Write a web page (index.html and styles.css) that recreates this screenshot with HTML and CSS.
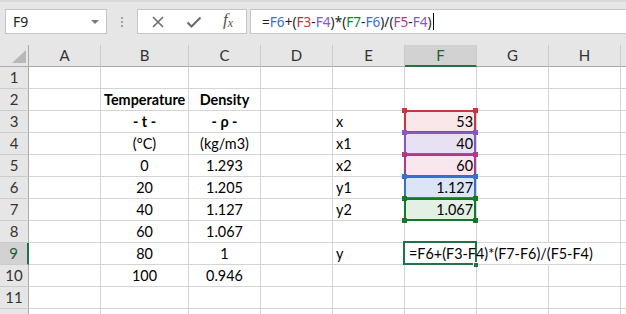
FILE: index.html
```html
<!DOCTYPE html>
<html>
<head>
<meta charset="utf-8">
<link rel="stylesheet" href="styles.css">
</head>
<body>
<div class="app">
  <div class="fbar">
    <div class="namebox">
      <span class="nb-text">F9</span>
      <svg class="nb-arrow" width="8" height="4" viewBox="0 0 8 4"><path d="M0 0H8L4 4Z" fill="#7a7a7a"/></svg>
    </div>
    <div class="grip"><span></span><span></span><span></span></div>
    <div class="btns">
      <svg class="ic" width="14" height="14" viewBox="0 0 14 14"><path d="M2 2L12 12M12 2L2 12" stroke="#6e6e6e" stroke-width="1.6" fill="none"/></svg>
      <svg class="ic" width="16" height="14" viewBox="0 0 16 14"><path d="M1.5 7.5L5.5 11.5L14.5 2.5" stroke="#6e6e6e" stroke-width="2.2" fill="none"/></svg>
      <span class="fx">f<sub>x</sub></span>
    </div>
    <div class="finput"><span class="k">=</span><span class="cb">F6</span><span class="k">+(</span><span class="cr">F3</span><span class="k">-</span><span class="cp">F4</span><span class="k">)*(</span><span class="cg">F7</span><span class="k">-</span><span class="cb">F6</span><span class="k">)/(</span><span class="cm">F5</span><span class="k">-</span><span class="cp">F4</span><span class="k">)</span><span class="caret"></span></div>
  </div>
  <div class="sheet">
    <div class="corner"><span class="tri"></span></div>
    <div class="ch">A</div><div class="ch">B</div><div class="ch">C</div><div class="ch">D</div><div class="ch">E</div><div class="ch sel">F</div><div class="ch">G</div><div class="ch">H</div><div class="ch"></div>

    <div class="rh">1</div><div class="c"></div><div class="c"></div><div class="c"></div><div class="c"></div><div class="c"></div><div class="c"></div><div class="c"></div><div class="c"></div><div class="c"></div>

    <div class="rh">2</div><div class="c"></div><div class="c ctr b">Temperature</div><div class="c ctr b">Density</div><div class="c"></div><div class="c"></div><div class="c"></div><div class="c"></div><div class="c"></div><div class="c"></div>

    <div class="rh">3</div><div class="c"></div><div class="c ctr b">- t -</div><div class="c ctr b">- ρ -</div><div class="c"></div><div class="c">x</div><div class="c r f-red">53<span class="ref red"><i class="h tl"></i><i class="h tr"></i><i class="h bl"></i><i class="h br"></i></span></div><div class="c"></div><div class="c"></div><div class="c"></div>

    <div class="rh">4</div><div class="c"></div><div class="c ctr">(°C)</div><div class="c ctr">(kg/m3)</div><div class="c"></div><div class="c">x1</div><div class="c r f-pur">40<span class="ref pur"><i class="h tl"></i><i class="h tr"></i><i class="h bl"></i><i class="h br"></i></span></div><div class="c"></div><div class="c"></div><div class="c"></div>

    <div class="rh">5</div><div class="c"></div><div class="c ctr">0</div><div class="c ctr">1.293</div><div class="c"></div><div class="c">x2</div><div class="c r f-mag">60<span class="ref mag"><i class="h tl"></i><i class="h tr"></i><i class="h bl"></i><i class="h br"></i></span></div><div class="c"></div><div class="c"></div><div class="c"></div>

    <div class="rh">6</div><div class="c"></div><div class="c ctr">20</div><div class="c ctr">1.205</div><div class="c"></div><div class="c">y1</div><div class="c r f-blu">1.127<span class="ref blu"><i class="h tl"></i><i class="h tr"></i><i class="h bl"></i><i class="h br"></i></span></div><div class="c"></div><div class="c"></div><div class="c"></div>

    <div class="rh">7</div><div class="c"></div><div class="c ctr">40</div><div class="c ctr">1.127</div><div class="c"></div><div class="c">y2</div><div class="c r f-grn">1.067<span class="ref grn"><i class="h tl"></i><i class="h tr"></i><i class="h bl"></i><i class="h br"></i></span></div><div class="c"></div><div class="c"></div><div class="c"></div>

    <div class="rh">8</div><div class="c"></div><div class="c ctr">60</div><div class="c ctr">1.067</div><div class="c"></div><div class="c"></div><div class="c"></div><div class="c"></div><div class="c"></div><div class="c"></div>

    <div class="rh sel">9</div><div class="c"></div><div class="c ctr">80</div><div class="c ctr">1</div><div class="c"></div><div class="c">y</div><div class="c active nob"><span class="over">=F6+(F3-F4)*(F7-F6)/(F5-F4)</span><span class="selbox"><i class="fh"></i></span></div><div class="c nob"></div><div class="c"></div><div class="c"></div>

    <div class="rh">10</div><div class="c"></div><div class="c ctr">100</div><div class="c ctr">0.946</div><div class="c"></div><div class="c"></div><div class="c"></div><div class="c"></div><div class="c"></div><div class="c"></div>

    <div class="rh">11</div><div class="c"></div><div class="c"></div><div class="c"></div><div class="c"></div><div class="c"></div><div class="c"></div><div class="c"></div><div class="c"></div><div class="c"></div>

    <div class="rh"></div><div class="c"></div><div class="c"></div><div class="c"></div><div class="c"></div><div class="c"></div><div class="c"></div><div class="c"></div><div class="c"></div><div class="c"></div>
  </div>
</div>
</body>
</html>
```
FILE: styles.css
```css
* { box-sizing: border-box; }
html, body { margin: 0; padding: 0; }
body { width: 626px; height: 314px; overflow: hidden; background: #fff; font-family: Lato, "Open Sans", sans-serif; }
.app { width: 626px; height: 314px; overflow: hidden; }

.fbar {
  height: 45px; background: #e6e6e6; display: flex; align-items: flex-start;
  border-top: 2px solid #dadada; padding-top: 7px;
}
.namebox {
  margin-left: 5px; width: 102px; height: 25px; background: #fff; border: 1px solid #c6c6c6;
  display: flex; align-items: center; justify-content: space-between; padding: 0 7px 0 7px;
}
.nb-text { font-family: "Noto Sans", sans-serif; font-size: 14px; color: #222; }
.grip { width: 30px; height: 25px; display: flex; flex-direction: column; align-items: center; justify-content: center; gap: 2px; }
.grip span { width: 2px; height: 2px; background: #a0a0a0; }
.btns {
  width: 110px; height: 25px; background: #fff; border: 1px solid #c6c6c6;
  display: flex; align-items: center; padding-left: 13px; gap: 21px;
}
.fx { font-family: "Liberation Serif", serif; font-style: italic; font-size: 17px; color: #555; line-height: 1; margin-top: -3px; }
.fx sub { font-size: 12px; vertical-align: -2px; }
.finput {
  margin-left: 3px; flex: 1; height: 25px; background: #fff; border: 1px solid #c6c6c6; border-right: 0;
  display: flex; align-items: center; padding-left: 11px;
  font-family: "Noto Sans", sans-serif; font-size: 13.6px; white-space: nowrap;
}
.k { color: #222; }
.cb { color: #3b6fd0; }
.cr { color: #d0303a; }
.cp { color: #8856c0; }
.cg { color: #12862e; }
.cm { color: #b53a86; }
.caret { display: inline-block; width: 1px; height: 17px; background: #000; margin-left: 1px; }

.sheet {
  display: grid;
  grid-template-columns: 29px 72px 88px 72px 72px 72px 72px 72px 72px 72px;
  grid-template-rows: 22px repeat(12, 22px);
  font-size: 14.4px; color: #000;
}
.corner { background: #e6e6e6; border-right: 1px solid #ababab; border-bottom: 1px solid #ababab; position: relative; }
.tri { position: absolute; right: 2px; bottom: 3px; width: 0; height: 0; border-left: 14px solid transparent; border-bottom: 13px solid #b8b8b8; }
.ch {
  background: #e6e6e6; border-right: 1px solid #cbcbcb; border-bottom: 1px solid #ababab;
  text-align: center; line-height: 21px; color: #333; font-size: 15px;
}
.ch.sel { background: #d2d2d2; border-bottom: 2px solid #217346; color: #1f5e3a; }
.rh {
  background: #e6e6e6; border-right: 1px solid #ababab; border-bottom: 1px solid #cbcbcb;
  text-align: center; line-height: 21px; color: #333; font-size: 15px;
}
.rh.sel { background: #d2d2d2; border-right: 2px solid #217346; color: #1f5e3a; }
.c {
  border-right: 1px solid #d4d4d4; border-bottom: 1px solid #d4d4d4;
  line-height: 22px; padding: 0 3px; white-space: nowrap; position: relative;
}
.ctr { text-align: center; }
.r { text-align: right; }
.b { font-weight: bold; }
.nob { border-right-color: transparent; }

.f-red { background: #f9e7ea; }
.f-pur { background: #e8e1f3; }
.f-mag { background: #f8e7ee; }
.f-blu { background: #dbe5f6; }
.f-grn { background: #e3f0e4; }

.ref { position: absolute; left: -1px; top: -1px; right: 0; bottom: -1px; border: 2px solid; z-index: 1; }
.ref.red { border-color: #c8363f; color: #c8363f; }
.ref.pur { border-color: #8658c0; color: #8658c0; }
.ref.mag { border-color: #b13a84; color: #b13a84; }
.ref.blu { border-color: #3b6fc9; color: #3b6fc9; }
.ref.grn { border-color: #14772a; color: #14772a; }
.h { position: absolute; width: 5px; height: 5px; background: currentColor; }
.h.tl { left: -4px; top: -4px; }
.h.tr { right: -4px; top: -4px; }
.h.bl { left: -4px; bottom: -4px; }
.h.br { right: -4px; bottom: -4px; }

.active { overflow: visible; }
.over { position: relative; z-index: 2; padding-left: 1px; }
.selbox { position: absolute; left: -2px; top: -2px; right: -1px; bottom: -1px; border: 2px solid #217346; z-index: 1; }
.fh { position: absolute; right: -3px; bottom: -4px; width: 5px; height: 5px; background: #217346; border-left: 1px solid #fff; border-top: 1px solid #fff; }
```
